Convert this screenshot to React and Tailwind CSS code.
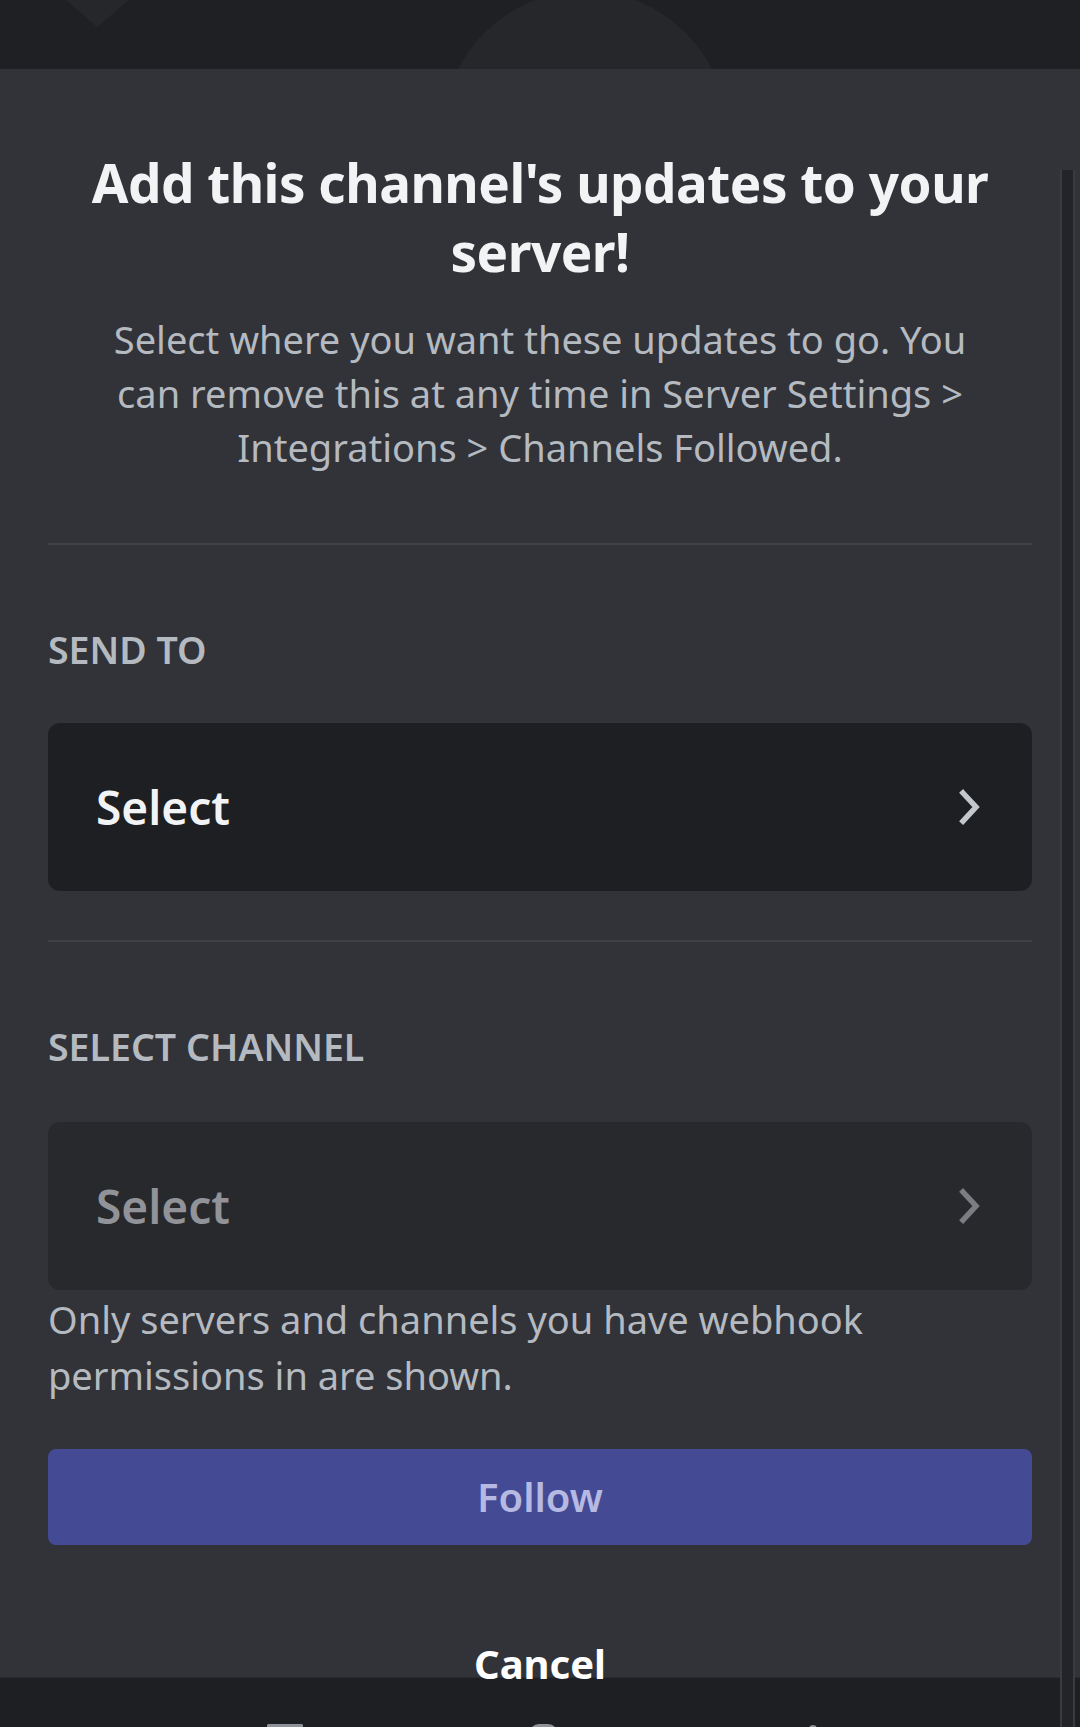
import React from 'react'

const Chevron = ({ className }) => (
  <svg viewBox="0 0 24 36" className={className} fill="none">
    <path d="M5 4 L18 18 L5 32" stroke="currentColor" strokeWidth="5.5" strokeLinecap="square" strokeLinejoin="miter" />
  </svg>
)

const SelectRow = ({ disabled }) => (
  <div
    className={
      'flex items-center justify-between h-[168px] rounded-[12px] pl-[48px] pr-[50px] ' +
      (disabled ? 'bg-[#28292d]' : 'bg-[#1e1f22]')
    }
  >
    <span
      className={
        'text-[46px] font-semibold leading-none ' + (disabled ? 'text-[#929398]' : 'text-[#f2f3f5]')
      }
    >
      Select
    </span>
    <Chevron className={'w-[24px] h-[36px] ' + (disabled ? 'text-[#7b7d82]' : 'text-[#c4c7cc]')} />
  </div>
)

const App = () => {
  return (
    <div
      className="relative w-[1080px] h-[1727px] overflow-hidden bg-[#1e1f22]"
      style={{ fontFamily: '"Noto Sans", "Open Sans", sans-serif' }}
    >
      {/* backdrop behind the sheet */}
      <div className="relative h-[69px] overflow-hidden bg-[#1f2024]">
        <svg className="absolute left-0 top-0" width="140" height="30" viewBox="0 0 140 30">
          <polygon points="66,0 129,0 97,27" fill="#26272b" />
        </svg>
        <div className="absolute left-[443px] top-[-9px] w-[284px] h-[284px] rounded-full bg-[#26272b]" />
      </div>

      {/* sheet */}
      <div className="relative bg-[#313338] h-[1608px] px-[48px] pt-[79px] flex flex-col">
        <h1 className="text-center text-[53px] leading-[69px] font-bold text-[#f2f3f5] tracking-[-0.5px]">
          Add this channel's updates to your
          <br />
          server!
        </h1>
        <p className="mt-[26px] text-center text-[38px] leading-[54px] text-[#b5bac1]">
          Select where you want these updates to go. You
          <br />
          can remove this at any time in Server Settings &gt;
          <br />
          Integrations &gt; Channels Followed.
        </p>

        <div className="mt-[69px] h-[2px] bg-[#3f4147]" />

        <div className="mt-[85px] text-[37.5px] leading-[40px] font-semibold text-[#b5bac1]">SEND TO</div>
        <div className="mt-[53px]">
          <SelectRow />
        </div>

        <div className="mt-[49px] h-[2px] bg-[#3f4147]" />

        <div className="mt-[85px] text-[37.5px] leading-[40px] font-semibold text-[#b5bac1]">SELECT CHANNEL</div>
        <div className="mt-[55px]">
          <SelectRow disabled />
        </div>
        <p className="mt-[1px] text-[38px] leading-[56px] text-[#b5bac1]">
          Only servers and channels you have webhook
          <br />
          permissions in are shown.
        </p>

        <button className="mt-[46px] h-[96px] w-full rounded-[8px] bg-[#444b94] text-[40px] font-semibold text-[#b6b9e2]">
          Follow
        </button>

        <div className="relative z-10 mt-auto -mb-[14px] text-center text-[40px] leading-[54px] font-bold text-white">
          Cancel
        </div>
      </div>

      {/* bottom nav, only the tops of the icons are on screen */}
      <div className="relative h-[50px] bg-[#1e1f22] border-t border-[#2a2b30]">
        <div className="absolute left-[267px] top-[46px] w-[36px] h-[10px] border-t-[3px] border-x-[3px] border-[#8e929a] rounded-t-[2px]" />
        <div className="absolute left-[529px] top-[46px] w-[29px] h-[10px] border-t-[3px] border-x-[3px] border-[#8e929a] rounded-t-[12px]" />
        <div className="absolute left-[809px] top-[47px] w-[8px] h-[8px] rounded-full bg-[#8e929a]" />
      </div>

      {/* scrollbar */}
      <div className="absolute left-[1060px] top-[170px] bottom-0 w-[15px] border-x-2 border-[#393b40] bg-[#232428]" />
    </div>
  )
}

export default App
